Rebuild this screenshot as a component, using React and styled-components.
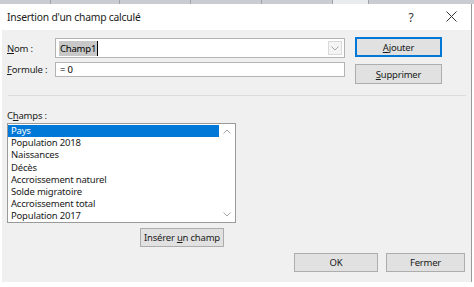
import React from "react";
import styled, { createGlobalStyle } from "styled-components";

const GlobalStyle = createGlobalStyle`
  html, body {
    margin: 0;
    padding: 0;
    background: #ffffff;
  }
  body {
    font-family: "Segoe UI", "Noto Sans", "Liberation Sans", sans-serif;
    font-size: 9.5px;
    letter-spacing: -0.2px;
    color: #000;
  }
`;

const fields = [
  "Pays",
  "Population 2018",
  "Naissances",
  "Décès",
  "Accroissement naturel",
  "Solde migratoire",
  "Accroissement total",
  "Population 2017",
];

const sheetCols = [50, 68, 70, 70, 70, 35, 111];

const Screen = styled.div`
  width: 474px;
  height: 287px;
  overflow: hidden;
  background: #ffffff;
`;

const SheetStrip = styled.div`
  display: flex;
  height: 4px;
  background: #c9ccd0;
`;

const SheetCell = styled.div`
  flex: 0 0 auto;
  border-right: 1px solid #9fa3a8;
  background: ${(p) => (p.$light ? "#e9ebee" : "transparent")};
`;

const Frame = styled.div`
  width: 469px;
  margin-left: 2px;
  border-right: 1px solid #9a9a9a;
  display: flex;
  flex-direction: column;
`;

const TitleBar = styled.div`
  height: 26px;
  display: flex;
  align-items: center;
  background: #ffffff;
  padding-left: 5px;
`;

const Title = styled.div`
  flex: 1;
  font-size: 10.3px;
  color: #1a1a1a;
`;

const TitleButton = styled.div`
  width: 40px;
  text-align: center;
  font-size: 12px;
  color: #333;
`;

const Body = styled.div`
  height: 252px;
  background: #f0f0f0;
  display: flex;
  flex-direction: column;
`;

const TopArea = styled.div`
  display: flex;
  padding-left: 5px;
`;

const Fields = styled.div`
  display: flex;
  flex-direction: column;
`;

const FieldRow = styled.div`
  display: flex;
  align-items: center;
  margin-top: ${(p) => p.$top}px;
  height: ${(p) => p.$h}px;
`;

const Label = styled.div`
  width: 48px;
  color: #1a1a1a;
`;

const U = styled.span`
  text-decoration: underline;
  text-underline-offset: 1px;
`;

const Combo = styled.div`
  box-sizing: border-box;
  width: 290px;
  height: 100%;
  background: #fff;
  border: 1px solid #b4b4b4;
  display: flex;
  align-items: center;
  padding-left: 3px;
`;

const Selected = styled.span`
  background: #c8c8c8;
  padding: 1px 1px;
  border-right: 1px solid #000;
`;

const DropBox = styled.div`
  margin-left: auto;
  margin-right: 2px;
  width: 14px;
  height: 14px;
  box-sizing: border-box;
  border: 1px solid #dadada;
  background: #f4f4f4;
  display: flex;
  align-items: center;
  justify-content: center;
`;

const TextInput = styled.div`
  box-sizing: border-box;
  width: 290px;
  height: 100%;
  background: #fff;
  border: 1px solid #b4b4b4;
  display: flex;
  align-items: center;
  padding-left: 4px;
`;

const SideButtons = styled.div`
  display: flex;
  flex-direction: column;
  gap: 7px;
  margin: 7px 0 0 10px;
`;

const Button = styled.div`
  box-sizing: border-box;
  width: ${(p) => p.$w || 87}px;
  height: ${(p) => p.$h || 20}px;
  background: #e1e1e1;
  border: ${(p) => (p.$default ? "2px solid #0078d7" : "1px solid #adadad")};
  display: flex;
  align-items: center;
  justify-content: center;
  white-space: nowrap;
  color: #1a1a1a;
`;

const Separator = styled.div`
  height: 1px;
  background: #dcdcdc;
  margin: 11px 5px 0 6px;
`;

const SectionLabel = styled.div`
  margin: 13px 0 0 5px;
  height: 14px;
  color: #1a1a1a;
`;

const ListBox = styled.div`
  box-sizing: border-box;
  width: 229px;
  height: 100px;
  margin: 0 0 0 5px;
  border: 1px solid #9a9a9a;
  background: #fff;
  display: flex;
`;

const Items = styled.div`
  flex: 1;
  padding-top: 1px;
`;

const Item = styled.div`
  height: 12.2px;
  line-height: 12px;
  padding-left: 3px;
  white-space: nowrap;
  background: ${(p) => (p.$active ? "#0078d7" : "transparent")};
  color: ${(p) => (p.$active ? "#fff" : "#1a1a1a")};
`;

const ScrollBar = styled.div`
  width: 16px;
  display: flex;
  flex-direction: column;
  justify-content: space-between;
  align-items: center;
  padding: 5px 0;
`;

const InsertRow = styled.div`
  display: flex;
  margin: 5px 0 0 138px;
`;

const Footer = styled.div`
  display: flex;
  gap: 8px;
  margin: 6px 0 0 292px;
`;

const Chevron = ({ up }) => (
  <svg width="8" height="5" viewBox="0 0 8 5">
    <path
      d={up ? "M0.5 4.5 L4 1 L7.5 4.5" : "M0.5 0.5 L4 4 L7.5 0.5"}
      fill="none"
      stroke="#a6a6a6"
      strokeWidth="1"
    />
  </svg>
);

const CloseIcon = () => (
  <svg width="11" height="11" viewBox="0 0 11 11">
    <path d="M0.5 0.5 L10.5 10.5 M10.5 0.5 L0.5 10.5" stroke="#333" strokeWidth="1" />
  </svg>
);

export default function App() {
  return (
    <Screen>
      <GlobalStyle />
      <SheetStrip>
        {sheetCols.map((w, i) => (
          <SheetCell key={i} $light={i === 5} style={{ width: w }} />
        ))}
      </SheetStrip>
      <Frame>
        <TitleBar>
          <Title>Insertion d'un champ calculé</Title>
          <TitleButton>?</TitleButton>
          <TitleButton>
            <CloseIcon />
          </TitleButton>
        </TitleBar>
        <Body>
          <TopArea>
            <Fields>
              <FieldRow $top={8} $h={20}>
                <Label>
                  <U>N</U>om :
                </Label>
                <Combo>
                  <Selected>Champ1</Selected>
                  <DropBox>
                    <Chevron />
                  </DropBox>
                </Combo>
              </FieldRow>
              <FieldRow $top={4} $h={15}>
                <Label>
                  <U>F</U>ormule :
                </Label>
                <TextInput>= 0</TextInput>
              </FieldRow>
            </Fields>
            <SideButtons>
              <Button $default>
                <span>
                  <U>A</U>jouter
                </span>
              </Button>
              <Button>
                <span>
                  <U>S</U>upprimer
                </span>
              </Button>
            </SideButtons>
          </TopArea>
          <Separator />
          <SectionLabel>
            C<U>h</U>amps :
          </SectionLabel>
          <ListBox>
            <Items>
              {fields.map((f, i) => (
                <Item key={f} $active={i === 0}>
                  {f}
                </Item>
              ))}
            </Items>
            <ScrollBar>
              <Chevron up />
              <Chevron />
            </ScrollBar>
          </ListBox>
          <InsertRow>
            <Button $w={84} $h={19}>
              <span>
                Insérer <U>u</U>n champ
              </span>
            </Button>
          </InsertRow>
          <Footer>
            <Button $w={84} $h={19}>OK</Button>
            <Button $w={79} $h={19}>Fermer</Button>
          </Footer>
        </Body>
      </Frame>
    </Screen>
  );
}
